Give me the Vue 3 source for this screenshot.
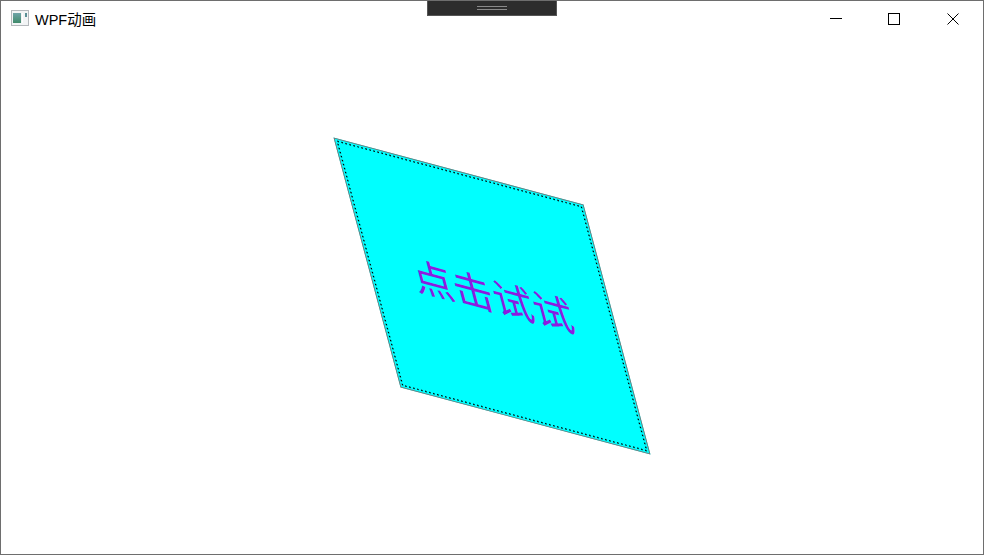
<script setup>
const title = 'WPF动画'
const label = '点击试试'
</script>

<template>
  <div class="window">
    <header class="titlebar">
      <svg class="app-icon" width="18" height="16" viewBox="0 0 18 16">
        <defs>
          <linearGradient id="pane" x1="0" y1="0" x2="0" y2="1">
            <stop offset="0" stop-color="#6fa3a8" />
            <stop offset="1" stop-color="#3f8a6a" />
          </linearGradient>
        </defs>
        <rect x="0.5" y="0.5" width="17" height="15" fill="#f2f4f5" stroke="#b4b8bc" />
        <rect x="2" y="3" width="8" height="10" fill="url(#pane)" />
        <rect x="11" y="3" width="1" height="10" fill="#ffffff" />
        <rect x="14" y="3" width="2" height="4" fill="#5b8f96" />
      </svg>
      <span class="title">{{ title }}</span>
      <div class="controls">
        <div class="control">
          <svg width="14" height="14" viewBox="0 0 14 14"><path d="M1 6.5H13" stroke="#000" fill="none" /></svg>
        </div>
        <div class="control">
          <svg width="14" height="14" viewBox="0 0 14 14"><rect x="1.5" y="1.5" width="11" height="11" stroke="#000" fill="none" /></svg>
        </div>
        <div class="control">
          <svg width="14" height="14" viewBox="0 0 14 14"><path d="M1.5 1.5L12.5 12.5M12.5 1.5L1.5 12.5" stroke="#000" fill="none" /></svg>
        </div>
      </div>
    </header>
    <main class="client">
      <button class="skewed" type="button">
        <svg class="focus" width="250" height="250" viewBox="0 0 250 250">
          <rect x="3" y="3" width="244" height="244" fill="none" stroke="#000" stroke-width="1.4" stroke-dasharray="1.6 2.4" />
        </svg>
        <span class="label">{{ label }}</span>
      </button>
    </main>
    <div class="grab"><i></i><i></i></div>
    <div class="edge-left"></div>
    <div class="edge-bottom"></div>
  </div>
</template>

<style>
html, body { margin: 0; background: #fff; }
</style>

<style scoped>
.window {
  position: relative;
  box-sizing: border-box;
  width: 984px;
  height: 555px;
  border: 1px solid #6e6e6e;
  background: #fff;
  display: flex;
  flex-direction: column;
  overflow: hidden;
  font-family: "Noto Sans", "Noto Sans CJK SC", sans-serif;
}
.titlebar {
  height: 37px;
  flex: none;
  display: flex;
  align-items: center;
  padding-left: 10px;
  padding-bottom: 1px;
  box-sizing: border-box;
}
.app-icon { flex: none; margin-top: -2px; }
.title {
  margin-left: 6px;
  font-family: "Liberation Sans", "Noto Sans CJK SC", sans-serif;
  font-size: 14.5px;
  color: #000;
  margin-top: -1px;
}
.controls { margin-left: auto; display: flex; align-self: stretch; margin-right: 1px; }
.control {
  width: 58.5px;
  display: flex;
  align-items: flex-start;
  justify-content: center;
  padding-top: 11px;
  box-sizing: border-box;
}
.control svg { display: block; }
.client {
  flex: 1;
  display: flex;
  align-items: center;
  justify-content: center;
}
.skewed {
  box-sizing: border-box;
  position: relative;
  flex: none;
  width: 250px;
  height: 250px;
  padding: 0 0 5px 2px;
  background: #00ffff;
  border: 1px solid #777;
  transform: matrix(1, 0.2679, 0.2679, 1, 0, 0);
  display: flex;
  align-items: center;
  justify-content: center;
}
.focus {
  position: absolute;
  left: -1px;
  top: -1px;
}
.label {
  font-family: "Noto Sans CJK SC", sans-serif;
  font-size: 40px;
  font-weight: 400;
  color: #8c1ce0;
  line-height: 1;
  white-space: nowrap;
}
.grab {
  position: absolute;
  left: 426px;
  top: -1px;
  width: 130px;
  height: 16px;
  box-sizing: border-box;
  background: #2d2d2d;
  border: 1px solid #555;
  display: flex;
  flex-direction: column;
  align-items: center;
  justify-content: center;
  gap: 2px;
}
.grab i { display: block; width: 30px; height: 1px; background: #8a8a8a; }
.edge-left {
  position: absolute;
  left: -1px;
  top: 87px;
  width: 1px;
  height: 14px;
  background: #222;
}
.edge-bottom {
  position: absolute;
  left: 151px;
  bottom: -1px;
  width: 222px;
  height: 1px;
  background: #1f7a6b;
}
</style>
